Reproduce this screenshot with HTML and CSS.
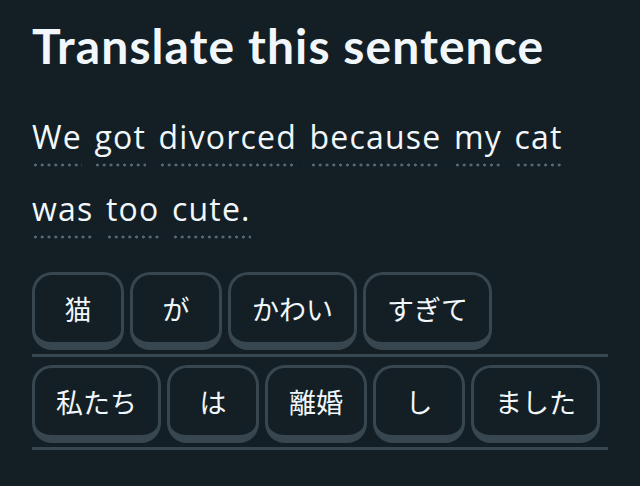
FILE: index.html
```html
<!DOCTYPE html>
<html lang="en">
<head>
<meta charset="utf-8">
<title>Translate this sentence</title>
<link rel="stylesheet" href="styles.css">
</head>
<body>
<main class="challenge">
  <h1 class="title">Translate this sentence</h1>
  <p class="prompt"><span class="word">We</span> <span class="word">got</span> <span class="word">divorced</span> <span class="word">because</span> <span class="word">my</span> <span class="word">cat</span> <span class="word">was</span> <span class="word">too</span> <span class="word">cute.</span></p>
  <div class="answer">
    <div class="row">
      <button class="tile" lang="ja">猫</button>
      <button class="tile" lang="ja">が</button>
      <button class="tile" lang="ja">かわい</button>
      <button class="tile" lang="ja">すぎて</button>
    </div>
    <div class="row">
      <button class="tile" lang="ja">私たち</button>
      <button class="tile" lang="ja">は</button>
      <button class="tile" lang="ja">離婚</button>
      <button class="tile" lang="ja">し</button>
      <button class="tile" lang="ja">ました</button>
    </div>
  </div>
</main>
</body>
</html>
```

FILE: styles.css
```css
html, body {
  margin: 0;
  padding: 0;
}

body {
  background: #131f24;
  width: 640px;
  height: 486px;
  overflow: hidden;
}

.challenge {
  padding: 23px 32px 0;
}

.title {
  margin: 0;
  font-family: Lato, "Noto Sans", sans-serif;
  font-weight: 700;
  font-size: 48px;
  line-height: 46px;
  letter-spacing: 1.1px;
  color: #f1f7fb;
}

.prompt {
  margin: 32px 0 0;
  font-family: "Open Sans", "Noto Sans", sans-serif;
  font-weight: 400;
  font-size: 32px;
  line-height: 72px;
  letter-spacing: 1.2px;
  word-spacing: 3px;
  color: #f1f7fb;
}

.word {
  padding-bottom: 9px;
  background-image: radial-gradient(circle, #56686f 1.3px, transparent 1.8px);
  background-size: 6.8px 4px;
  background-repeat: repeat-x;
  background-position: 0 100%;
}

.answer {
  margin-top: 19px;
}

.row {
  display: flex;
  gap: 6px;
  padding: 8px 0 4px;
  border-bottom: 3px solid #37464f;
}

.tile {
  box-sizing: border-box;
  height: 78px;
  min-width: 92px;
  padding: 0 21px;
  display: flex;
  align-items: center;
  justify-content: center;
  background: transparent;
  border: 3px solid #37464f;
  border-bottom-width: 8px;
  border-radius: 20px;
  font-family: "Noto Sans CJK JP", sans-serif;
  font-weight: 400;
  font-size: 27px;
  line-height: 38px;
  color: #f1f7fb;
}
```
